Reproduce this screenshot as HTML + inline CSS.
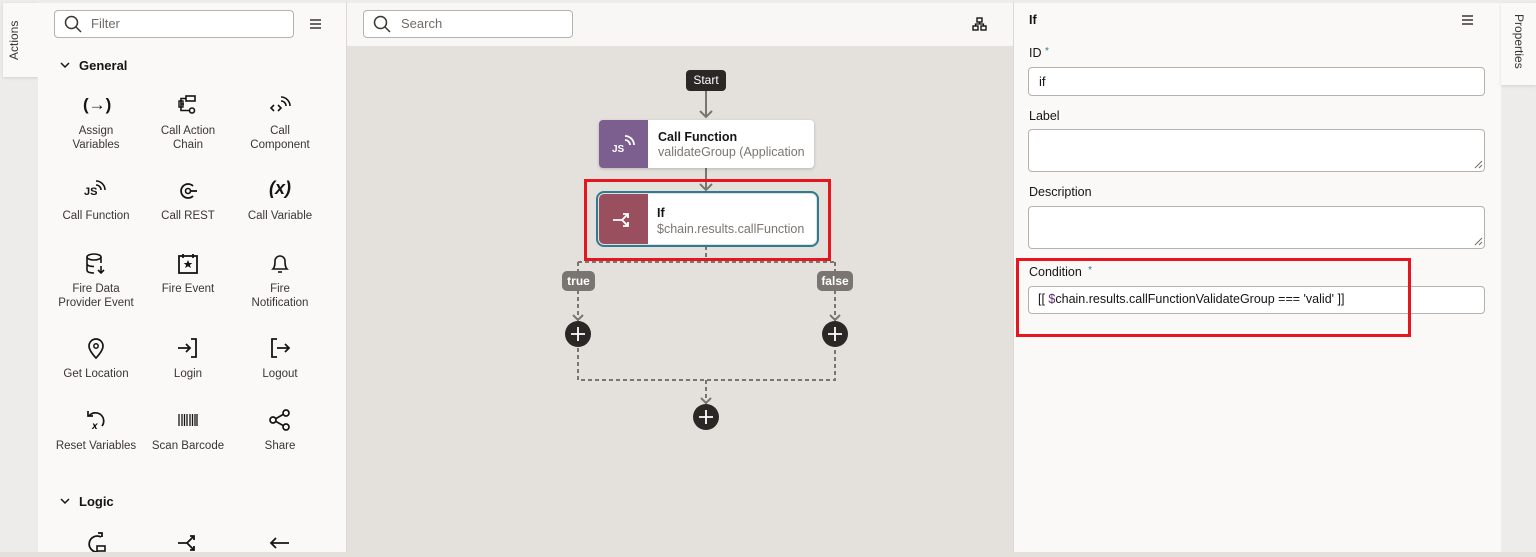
<!DOCTYPE html>
<html><head><meta charset="utf-8"><style>
*{box-sizing:border-box;margin:0;padding:0}
body{width:1536px;height:557px;overflow:hidden;background:#eeecea;font-family:"Liberation Sans",sans-serif;color:#161513;position:relative}
.a{position:absolute}
.lbl{position:absolute;width:92px;text-align:center;font-size:11.5px;line-height:14px;color:#3a3632}
.ic{position:absolute;width:24px;height:24px}
.inp{position:absolute;background:#fff;border:1px solid #b5b2ae;border-radius:4px}
.pl{position:absolute;font-size:12.5px;color:#161513}
svg{overflow:visible}
</style></head><body>
<!-- left tab strip -->
<div class="a" style="left:0;top:0;width:38px;height:557px;background:#eeecea"></div>
<div class="a" style="left:3px;top:3px;width:35px;height:74px;background:#faf9f8;box-shadow:0 1px 3px rgba(0,0,0,.12)"></div>
<div class="a" style="left:7px;top:60px;transform:rotate(-90deg);transform-origin:0 0;font-size:12px;color:#3a3632">Actions</div>
<!-- actions panel -->
<div class="a" style="left:38px;top:0;width:309px;height:552px;background:#faf9f8;border-right:1px solid #dcd9d5;border-top:3px solid #eeecea"></div>
<div class="inp" style="left:54px;top:10px;width:240px;height:28px"></div>
<svg class="a" style="left:64px;top:15px" width="18" height="18"><circle cx="7.5" cy="7.5" r="6" fill="none" stroke="#3a3632" stroke-width="1.5"/><path d="M12 12l5 5" stroke="#3a3632" stroke-width="1.5"/></svg>
<div class="a" style="left:91px;top:16px;font-size:13px;color:#6f6b67">Filter</div>
<svg class="a" style="left:310px;top:19px" width="11" height="10"><path d="M0 1h11M0 5h11M0 9h11" stroke="#3a3632" stroke-width="1.5"/></svg>
<svg class="a" style="left:60px;top:62px" width="10" height="7"><path d="M1 1l4 4 4-4" stroke="#161513" stroke-width="1.5" fill="none"/></svg>
<div class="a" style="left:79px;top:58px;font-size:13px;font-weight:bold">General</div>

<!-- icons row 1 -->
<div class="a" style="left:83px;top:95px;font-size:17px;font-weight:bold">(→)</div>
<svg class="ic" style="left:176px;top:94px" viewBox="0 0 24 24"><rect x="10" y="2" width="9" height="5" fill="none" stroke="#161513" stroke-width="1.6"/><path d="M10 4.5H5v12h8M5 10h3" stroke="#161513" stroke-width="1.6" fill="none"/><rect x="3" y="7" width="4" height="6" fill="none" stroke="#161513" stroke-width="1.4"/><circle cx="16" cy="16.5" r="2.5" fill="none" stroke="#161513" stroke-width="1.6"/></svg>
<svg class="ic" style="left:268px;top:94px" viewBox="0 0 24 24"><path d="M6 11l-3 3 3 3M10 11l3 3-3 3" stroke="#161513" stroke-width="1.6" fill="none"/><path d="M13 7a5 5 0 0 1 5 5M13 3a9 9 0 0 1 9 9" stroke="#161513" stroke-width="1.6" fill="none"/></svg>
<div class="lbl" style="left:50px;top:124px">Assign<br>Variables</div>
<div class="lbl" style="left:142px;top:124px">Call Action<br>Chain</div>
<div class="lbl" style="left:234px;top:124px">Call<br>Component</div>
<!-- row 2 -->
<div class="a" style="left:84px;top:186px;font-size:11px;font-weight:bold">JS</div>
<svg class="a" style="left:95px;top:180px" width="12" height="12"><path d="M1 5a5 5 0 0 1 5 5M1 1a9 9 0 0 1 9 9" stroke="#161513" stroke-width="1.6" fill="none"/></svg>
<svg class="ic" style="left:176px;top:179px" viewBox="0 0 24 24"><path d="M17 7a7 7 0 1 0 0 10" stroke="#161513" stroke-width="1.8" fill="none"/><circle cx="12" cy="12" r="2.5" fill="none" stroke="#161513" stroke-width="1.6"/><path d="M14.5 12H21" stroke="#161513" stroke-width="1.8"/></svg>
<div class="a" style="left:269px;top:178px;font-size:18px;font-style:italic;font-weight:bold">(x)</div>
<div class="lbl" style="left:50px;top:209px">Call Function</div>
<div class="lbl" style="left:142px;top:209px">Call REST</div>
<div class="lbl" style="left:234px;top:209px">Call Variable</div>
<!-- row 3 -->
<svg class="ic" style="left:84px;top:252px" viewBox="0 0 24 24"><ellipse cx="10" cy="5" rx="7" ry="3" fill="none" stroke="#161513" stroke-width="1.6"/><path d="M3 5v13c0 2 3 3 7 3M17 5v6M3 11.5c0 2 3 3 7 3" stroke="#161513" stroke-width="1.6" fill="none"/><path d="M17 14v7M14 18l3 3 3-3" stroke="#161513" stroke-width="1.6" fill="none"/></svg>
<svg class="ic" style="left:176px;top:252px" viewBox="0 0 24 24"><rect x="3" y="4" width="18" height="17" fill="none" stroke="#161513" stroke-width="1.8"/><path d="M7 2v4M17 2v4" stroke="#161513" stroke-width="1.8"/><path d="M12 8l1.3 3h3l-2.4 2 1 3-2.9-1.8-2.9 1.8 1-3-2.4-2h3z" fill="#161513"/></svg>
<svg class="ic" style="left:268px;top:252px" viewBox="0 0 24 24"><path d="M5 17c2-2 2-5 2-8a5 5 0 0 1 10 0c0 3 0 6 2 8z" fill="none" stroke="#161513" stroke-width="1.6"/><path d="M10 20h4" stroke="#161513" stroke-width="1.6"/></svg>
<div class="lbl" style="left:50px;top:282px">Fire Data<br>Provider Event</div>
<div class="lbl" style="left:142px;top:282px">Fire Event</div>
<div class="lbl" style="left:234px;top:282px">Fire<br>Notification</div>
<!-- row 4 -->
<svg class="ic" style="left:84px;top:336px" viewBox="0 0 24 24"><path d="M12 22s-7-7-7-12a7 7 0 0 1 14 0c0 5-7 12-7 12z" fill="none" stroke="#161513" stroke-width="1.7"/><circle cx="12" cy="10" r="2.2" fill="none" stroke="#161513" stroke-width="1.5"/></svg>
<svg class="ic" style="left:176px;top:336px" viewBox="0 0 24 24"><path d="M2 12h12M10 8l4 4-4 4M15 3h5v18h-5" stroke="#161513" stroke-width="1.8" fill="none"/></svg>
<svg class="ic" style="left:268px;top:336px" viewBox="0 0 24 24"><path d="M9 3H4v18h5M9 12h12M17 8l4 4-4 4" stroke="#161513" stroke-width="1.8" fill="none"/></svg>
<div class="lbl" style="left:50px;top:367px">Get Location</div>
<div class="lbl" style="left:142px;top:367px">Login</div>
<div class="lbl" style="left:234px;top:367px">Logout</div>
<!-- row 5 -->
<svg class="ic" style="left:84px;top:408px" viewBox="0 0 24 24"><path d="M5 8a8 8 0 1 1 13 10M4 3v5h5" stroke="#161513" stroke-width="1.7" fill="none"/><text x="8" y="21" font-size="10" font-style="italic" font-weight="bold" font-family="Liberation Sans">x</text></svg>
<svg class="ic" style="left:176px;top:408px" viewBox="0 0 24 24"><path d="M3 6v12M6 6v12M8.5 6v12M11 6v12M14 6v12M16.5 6v12M19 6v12M21 6v12" stroke="#161513" stroke-width="1.3"/></svg>
<svg class="ic" style="left:268px;top:408px" viewBox="0 0 24 24"><circle cx="5" cy="12" r="3" fill="none" stroke="#161513" stroke-width="1.7"/><circle cx="18" cy="5" r="3" fill="none" stroke="#161513" stroke-width="1.7"/><circle cx="18" cy="19" r="3" fill="none" stroke="#161513" stroke-width="1.7"/><path d="M8 10.5l7-4M8 13.5l7 4" stroke="#161513" stroke-width="1.7"/></svg>
<div class="lbl" style="left:50px;top:439px">Reset Variables</div>
<div class="lbl" style="left:142px;top:439px">Scan Barcode</div>
<div class="lbl" style="left:234px;top:439px">Share</div>
<svg class="a" style="left:60px;top:498px" width="10" height="7"><path d="M1 1l4 4 4-4" stroke="#161513" stroke-width="1.5" fill="none"/></svg>
<div class="a" style="left:79px;top:494px;font-size:13px;font-weight:bold">Logic</div>
<svg class="ic" style="left:84px;top:531px" viewBox="0 0 24 24"><path d="M17 6a8 8 0 1 0-3 15M14 2h4v4" stroke="#161513" stroke-width="1.8" fill="none"/><rect x="13" y="15" width="8" height="5" fill="none" stroke="#161513" stroke-width="1.6"/></svg>
<svg class="ic" style="left:176px;top:531px" viewBox="0 0 24 24"><path d="M2 12h9l7-7M11 12l7 7M14 5h4v4M14 19h4v-4" stroke="#161513" stroke-width="1.8" fill="none"/></svg>
<svg class="ic" style="left:268px;top:531px" viewBox="0 0 24 24"><path d="M21 12H4M8 7l-5 5 5 5" stroke="#161513" stroke-width="1.8" fill="none"/></svg>

<!-- canvas -->
<div class="a" style="left:347px;top:0;width:666px;height:552px;background:#e4e1dd;border-top:3px solid #eeecea"></div>
<div class="a" style="left:347px;top:3px;width:666px;height:43px;background:#f8f7f5"></div>
<div class="inp" style="left:363px;top:10px;width:210px;height:28px"></div>
<svg class="a" style="left:373px;top:15px" width="18" height="18"><circle cx="7.5" cy="7.5" r="6" fill="none" stroke="#3a3632" stroke-width="1.5"/><path d="M12 12l5 5" stroke="#3a3632" stroke-width="1.5"/></svg>
<div class="a" style="left:401px;top:16px;font-size:13px;color:#6f6b67">Search</div>
<svg class="a" style="left:972px;top:17px" width="15" height="15"><rect x="5" y="1" width="5" height="4" fill="none" stroke="#161513" stroke-width="1.4"/><rect x="1" y="9" width="5" height="4" fill="none" stroke="#161513" stroke-width="1.4"/><rect x="9" y="9" width="5" height="4" fill="none" stroke="#161513" stroke-width="1.4"/><path d="M7.5 5v2M3.5 9V7h8v2" stroke="#161513" stroke-width="1.3" fill="none"/></svg>

<svg class="a" style="left:0;top:0" width="1536" height="557">
<g stroke="#7a7571" stroke-width="2" fill="none">
<path d="M706 91v26M700 111l6 6 6-6"/>
<path d="M706 168v22M700 184l6 6 6-6"/>
</g>
<g stroke="#7a7571" stroke-width="2" fill="none" stroke-dasharray="4 3">
<path d="M706 246v16M578 262h257M578 262v60M835 262v60M578 348v32h257v-32M706 380v24"/>
</g>
<g stroke="#7a7571" stroke-width="2" fill="none">
<path d="M573 315l5 5 5-5M830 315l5 5 5-5M701 398l5 5 5-5"/>
</g>
<circle cx="578" cy="334" r="13" fill="#2b2724"/><circle cx="835" cy="334" r="13" fill="#2b2724"/><circle cx="706" cy="417" r="13" fill="#2b2724"/>
<g stroke="#fff" stroke-width="1.8"><path d="M571 334h14M578 327v14M828 334h14M835 327v14M699 417h14M706 410v14"/></g>
</svg>
<div class="a" style="left:686px;top:70px;width:40px;height:21px;background:#2b2724;border-radius:4px;color:#fff;font-size:12px;line-height:21px;text-align:center">Start</div>
<div class="a" style="left:562px;top:271px;width:33px;height:20px;background:#7a7571;border-radius:5px;color:#fff;font-size:12px;font-weight:bold;line-height:20px;text-align:center">true</div>
<div class="a" style="left:817px;top:271px;width:36px;height:20px;background:#7a7571;border-radius:5px;color:#fff;font-size:12px;font-weight:bold;line-height:20px;text-align:center">false</div>

<div class="a" style="left:599px;top:120px;width:215px;height:48px;background:#fff;border-radius:4px;box-shadow:0 1px 3px rgba(0,0,0,.2);overflow:hidden">
 <div class="a" style="left:0;top:0;width:49px;height:48px;background:#7c5f8f"></div>
 <div class="a" style="left:13px;top:24px;font-size:10px;font-weight:bold;color:#fff">JS</div>
 <svg class="a" style="left:25px;top:15px" width="12" height="12"><path d="M1 5a5 5 0 0 1 5 5M1 1a9 9 0 0 1 9 9" stroke="#fff" stroke-width="1.8" fill="none"/></svg>
 <div class="a" style="left:59px;top:10px;font-size:12.5px;font-weight:bold">Call Function</div>
 <div class="a" style="left:59px;top:25px;font-size:12.5px;color:#7a7571;white-space:nowrap">validateGroup (Application</div>
</div>
<div class="a" style="left:596px;top:191px;width:223px;height:56px;border:2.5px solid #2d7c92;border-radius:8px"></div>
<div class="a" style="left:599px;top:194px;width:217px;height:50px;background:#fff;border-radius:5px;overflow:hidden">
 <div class="a" style="left:0;top:0;width:49px;height:50px;background:#9a4f5f"></div>
 <svg class="a" style="left:13px;top:16px" width="22" height="18"><path d="M1 10h9l5-5M10 10l5 5M11 4h5v4M11 16h5v-4" stroke="#fff" stroke-width="1.8" fill="none"/></svg>
 <div class="a" style="left:58px;top:12px;font-size:12.5px;font-weight:bold">If</div>
 <div class="a" style="left:58px;top:28px;font-size:12.5px;color:#7a7571;white-space:nowrap">$chain.results.callFunction</div>
</div>
<div class="a" style="left:584px;top:179px;width:247px;height:82px;border:3px solid #e5161f"></div>

<!-- properties -->
<div class="a" style="left:1013px;top:0;width:488px;height:552px;background:#faf9f8;border-left:1px solid #dcd9d5;border-top:3px solid #eeecea"></div>
<div class="a" style="left:1029px;top:13px;font-size:12.5px;font-weight:bold">If</div>
<svg class="a" style="left:1462px;top:15px" width="11" height="10"><path d="M0 1h11M0 5h11M0 9h11" stroke="#3a3632" stroke-width="1.5"/></svg>
<div class="pl" style="left:1029px;top:46px">ID <span style="color:#2d7c92;font-size:10px;vertical-align:top">*</span></div>
<div class="inp" style="left:1028px;top:67px;width:457px;height:29px"></div>
<div class="a" style="left:1039px;top:74px;font-size:13px">if</div>
<div class="pl" style="left:1029px;top:109px">Label</div>
<div class="inp" style="left:1028px;top:129px;width:457px;height:43px"></div>
<div class="pl" style="left:1029px;top:185px">Description</div>
<div class="inp" style="left:1028px;top:206px;width:457px;height:43px"></div>
<svg class="a" style="left:1474px;top:160px" width="9" height="9"><path d="M1 8l7-7M5 8l3-3" stroke="#6f6b67"/></svg>
<svg class="a" style="left:1474px;top:237px" width="9" height="9"><path d="M1 8l7-7M5 8l3-3" stroke="#6f6b67"/></svg>
<div class="pl" style="left:1029px;top:265px">Condition <span style="color:#2d7c92;font-size:10px;vertical-align:top">&nbsp;*</span></div>
<div class="inp" style="left:1028px;top:286px;width:457px;height:28px"></div>
<div class="a" style="left:1038px;top:292px;font-size:12.5px;white-space:nowrap">[[ <span style="color:#5a2e6e">$</span>chain.results.callFunctionValidateGroup === 'valid' ]]</div>
<div class="a" style="left:1016px;top:258px;width:395px;height:79px;border:3px solid #e5161f"></div>
<!-- right tab -->
<div class="a" style="left:1501px;top:0;width:35px;height:557px;background:#eeecea"></div>
<div class="a" style="left:1501px;top:3px;width:35px;height:82px;background:#faf9f8;box-shadow:0 1px 3px rgba(0,0,0,.12)"></div>
<div class="a" style="left:1526px;top:14px;transform:rotate(90deg);transform-origin:0 0;font-size:12px;color:#3a3632">Properties</div>
<div class="a" style="left:0;top:552px;width:1536px;height:5px;background:#e4e1dd"></div>
</body></html>
